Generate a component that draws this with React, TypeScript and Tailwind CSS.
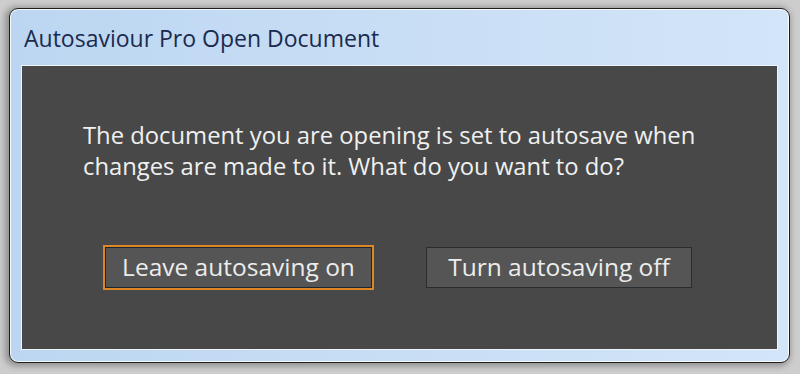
import React from 'react'

const ui = { fontFamily: '"Open Sans", "Noto Sans", sans-serif' }

function DialogButton({ label, focused }: { label: string; focused?: boolean }) {
  return (
    <button
      className={
        focused
          ? 'h-[41px] w-[267px] border border-[#1c2633] bg-[#555555] text-[24.5px] text-[#ececec] shadow-[0_0_0_2px_#dd8626]'
          : 'h-[41px] w-[266px] border border-[#2c2c2c] bg-[#555555] text-[24.5px] text-[#ececec]'
      }
      style={ui}
    >
      {label}
    </button>
  )
}

export default function App() {
  return (
    <div className="h-[374px] w-[800px] overflow-hidden bg-[#cdcdcd] pl-[9px] pt-[8px]">
      {/* window frame */}
      <div className="flex h-[355px] w-[781px] flex-col rounded-[9px] border border-[#1e1e1e] bg-gradient-to-r from-[#bcd6f1] via-[#c8def5] to-[#d3e5f8] shadow-[-2px_1px_6px_2px_rgba(0,0,0,0.3),inset_0_0_0_1px_rgba(255,255,255,0.85)]">
        <div className="flex h-[56px] items-center pl-[14px] pt-[2px]">
          <span className="text-[23px] text-[#1b2a4e]" style={ui}>
            Autosaviour Pro Open Document
          </span>
        </div>
        <div className="mx-[11px] mb-[12px] flex flex-1 flex-col border border-[#eef4fa] bg-[#484848]">
          <div className="pl-[61px] pt-[54px] text-[23.8px] leading-[31px] text-[#f0f0f0]" style={ui}>
            <p>The document you are opening is set to autosave when</p>
            <p>changes are made to it. What do you want to do?</p>
          </div>
          <div className="mt-[65px] flex gap-[54px] pl-[83px]">
            <DialogButton label="Leave autosaving on" focused />
            <DialogButton label="Turn autosaving off" />
          </div>
        </div>
      </div>
    </div>
  )
}
